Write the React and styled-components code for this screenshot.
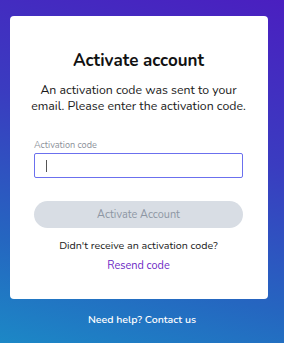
import React from 'react';
import styled, { createGlobalStyle } from 'styled-components';

const Global = createGlobalStyle`
  html, body {
    margin: 0;
    padding: 0;
  }
  body {
    font-family: 'Nunito', Lato, 'Open Sans', sans-serif;
  }
`

const Page = styled.div`
  width: 284px;
  height: 343px;
  box-sizing: border-box;
  padding: 16px 0 0 10px;
  background: linear-gradient(195deg, #4a1fc0 0%, #3a3cc0 40%, #2566c0 75%, #1c88c6 100%);
  overflow: hidden;
`

const Card = styled.div`
  width: 258px;
  box-sizing: border-box;
  background: #fff;
  border-radius: 4px;
  padding: 34px 25px 25px 24px;
  text-align: center;
  color: #1a1a1a;
`

const Title = styled.h1`
  margin: 0;
  font-size: 17px;
  line-height: 22px;
  font-weight: 700;
  color: #111;
`

const Desc = styled.p`
  margin: 10px -6px 0;
  font-size: 12.3px;
  line-height: 16px;
  color: #1a1a1a;
`

const Label = styled.label`
  display: block;
  margin-top: 24px;
  text-align: left;
  font-size: 9.1px;
  line-height: 14px;
  color: #8c919a;
`

const Input = styled.div`
  margin-top: 1px;
  height: 25px;
  box-sizing: border-box;
  border: 1px solid #6b70ee;
  border-radius: 2px;
  display: flex;
  align-items: center;
  padding-left: 11px;
`

const Caret = styled.span`
  width: 1px;
  height: 12px;
  background: #555;
`

const Button = styled.button`
  display: block;
  width: 100%;
  margin-top: 23px;
  height: 27px;
  border: none;
  border-radius: 14px;
  background: #d8dde4;
  color: #8d96a3;
  font-family: inherit;
  font-size: 10.9px;
`

const Note = styled.div`
  margin-top: ${p => p.$gap}px;
  font-size: ${p => p.$size}px;
  line-height: 16px;
  color: ${p => p.$color};
`

const Help = styled.div`
  margin: 13px 0 0 -10px;
  width: 284px;
  text-align: center;
  font-size: 10.6px;
  line-height: 16px;
  font-weight: 600;
  color: #fff;
`

const App = () => {
  return (
    <Page>
      <Global />
      <Card>
        <Title>Activate account</Title>
        <Desc>An activation code was sent to your email. Please enter the activation code.</Desc>
        <Label>Activation code</Label>
        <Input><Caret /></Input>
        <Button>Activate Account</Button>
        <Note $gap={10} $size={10.7} $color='#1a1a1a'>Didn't receive an activation code?</Note>
        <Note $gap={4} $size={10.9} $color='#6a1fc4'>Resend code</Note>
      </Card>
      <Help>Need help? Contact us</Help>
    </Page>
  );
}

export default App
